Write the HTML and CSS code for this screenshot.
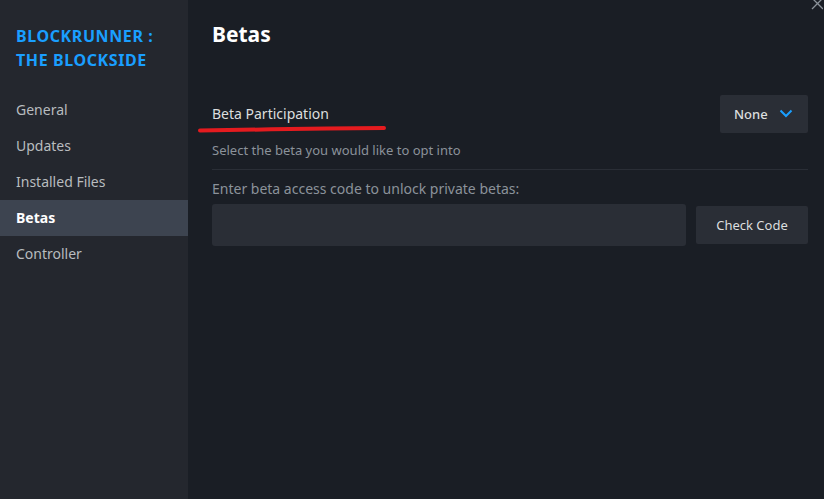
FILE: index.html
```html
<!DOCTYPE html>
<html lang="en">
<head>
<meta charset="utf-8">
<title>Betas</title>
<link rel="stylesheet" href="styles.css">
</head>
<body>
<div class="window">
  <aside class="sidebar">
    <div class="game-title">BLOCKRUNNER :<br>THE BLOCKSIDE</div>
    <nav class="nav">
      <div class="nav-item">General</div>
      <div class="nav-item">Updates</div>
      <div class="nav-item">Installed Files</div>
      <div class="nav-item active">Betas</div>
      <div class="nav-item">Controller</div>
    </nav>
  </aside>
  <main class="content">
    <h1 class="heading">Betas</h1>
    <div class="row">
      <div class="label-wrap">
        <div class="label">Beta Participation</div>
        <svg class="scribble" width="192" height="10" viewBox="0 0 192 10"><path d="M3 6.5 C 40 6, 90 5, 130 4.5 S 180 4, 187 4" stroke="#e51b1f" stroke-width="4" stroke-linecap="round" fill="none"/></svg>
      </div>
      <div class="dropdown">None
        <svg class="chev" width="14" height="9" viewBox="0 0 14 9"><path d="M1.5 1.5 L7 7 L12.5 1.5" stroke="#1a9fff" stroke-width="2" fill="none"/></svg>
      </div>
    </div>
    <div class="desc">Select the beta you would like to opt into</div>
    <div class="sep"></div>
    <div class="code-label">Enter beta access code to unlock private betas:</div>
    <div class="code-row">
      <div class="code-input"></div>
      <div class="btn">Check Code</div>
    </div>
  </main>
  <svg class="close" width="12" height="12" viewBox="0 0 12 12"><path d="M1 -2 L12 9 M12 -2 L1 9" stroke="#8b929a" stroke-width="1.3" fill="none"/></svg>
</div>
</body>
</html>
```
FILE: styles.css
```css
html, body {
  margin: 0;
  padding: 0;
  background: #1a1e25;
}
body {
  font-family: "Noto Sans", "Open Sans", sans-serif;
  width: 824px;
  height: 499px;
  overflow: hidden;
}
.window {
  position: relative;
  display: flex;
  width: 824px;
  height: 499px;
}
.sidebar {
  width: 188px;
  flex: none;
  background: #24272e;
}
.game-title {
  padding: 24px 16px 0 16px;
  color: #1a9fff;
  font-weight: 700;
  font-size: 16px;
  line-height: 24px;
  letter-spacing: 0.6px;
}
.nav {
  margin-top: 20px;
}
.nav-item {
  height: 36px;
  line-height: 36px;
  padding-left: 16px;
  color: #b8bcbf;
  font-size: 14px;
}
.nav-item.active {
  background: #3d4450;
  color: #ffffff;
  font-weight: 700;
}
.content {
  flex: 1;
  padding: 0 16px 0 24px;
  position: relative;
}
.heading {
  margin: 20px 0 0 0;
  font-size: 21px;
  line-height: 28px;
  color: #ffffff;
  font-weight: 700;
}
.row {
  margin-top: 47px;
  display: flex;
  justify-content: space-between;
  align-items: flex-start;
}
.label-wrap {
  position: relative;
  padding-top: 10px;
}
.label {
  color: #dcdedf;
  font-size: 14px;
  line-height: 18px;
}
.scribble {
  position: absolute;
  left: -15px;
  top: 29px;
}
.dropdown {
  width: 88px;
  height: 38px;
  box-sizing: border-box;
  background: #2a2e36;
  border-radius: 2px;
  color: #dcdedf;
  font-size: 13px;
  font-weight: 500;
  display: flex;
  align-items: center;
  padding-left: 14px;
  gap: 11px;
}
.chev {
  margin-top: -2px;
}
.desc {
  margin-top: 8px;
  color: #8b929a;
  font-size: 13px;
  line-height: 18px;
}
.sep {
  margin-top: 10px;
  height: 1px;
  background: #2a2e36;
}
.code-label {
  margin-top: 10px;
  color: #8b929a;
  font-size: 14px;
  line-height: 18px;
}
.code-row {
  margin-top: 6px;
  display: flex;
  align-items: center;
  gap: 10px;
}
.code-input {
  width: 474px;
  height: 42px;
  background: #2a2e36;
  border-radius: 3px;
}
.btn {
  flex: 1;
  height: 38px;
  background: #2a2e36;
  border-radius: 2px;
  color: #dcdedf;
  font-size: 13px;
  display: flex;
  align-items: center;
  justify-content: center;
}
.close {
  position: absolute;
  right: 1px;
  top: 0;
}
```
